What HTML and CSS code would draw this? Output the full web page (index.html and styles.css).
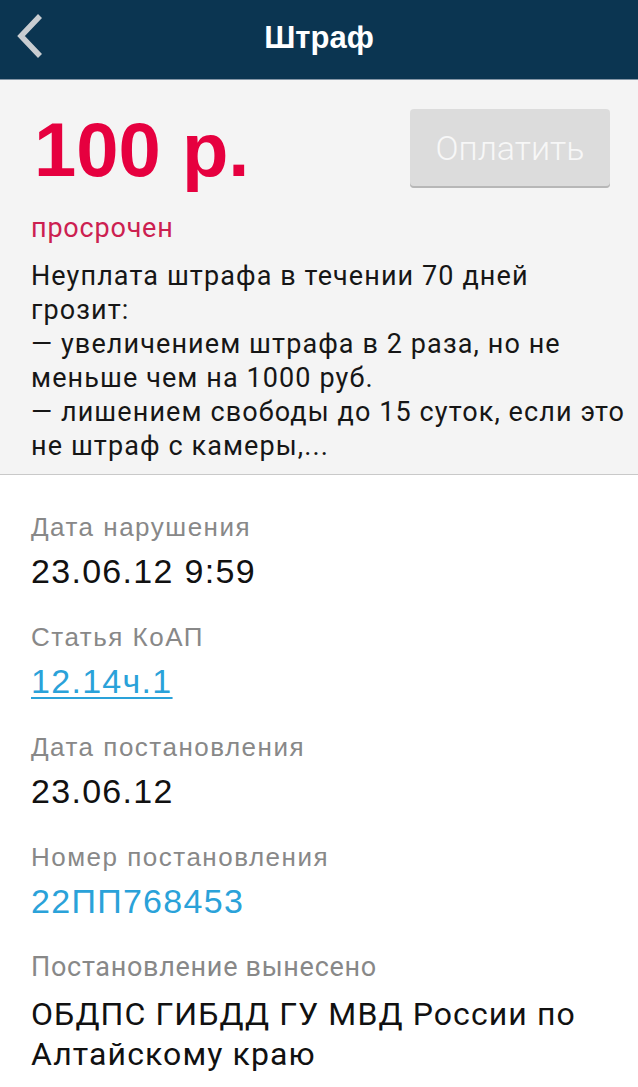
FILE: index.html
```html
<!DOCTYPE html>
<html lang="ru">
<head>
<meta charset="utf-8">
<title>Штраф</title>
<link rel="stylesheet" href="styles.css">
</head>
<body>
<header class="navbar">
  <a class="back" href="#" aria-label="Назад">
    <svg width="30" height="46" viewBox="0 0 30 46"><path d="M25 3 L6 23 L25 43" fill="none" stroke="#c9cdd1" stroke-width="5.5" stroke-linecap="butt" stroke-linejoin="miter"/></svg>
  </a>
  <h1 class="title">Штраф</h1>
</header>
<section class="summary">
  <div class="amount-row">
    <div class="amount">100 р.</div>
    <button class="pay" type="button">Оплатить</button>
  </div>
  <div class="status">просрочен</div>
  <p class="warning">Неуплата штрафа в течении 70 дней грозит:<br>— увеличением штрафа в 2 раза, но не меньше чем на 1000 руб.<br>— лишением свободы до 15 суток, если это не штраф с камеры,...</p>
</section>
<section class="details">
  <div class="field">
    <div class="label">Дата нарушения</div>
    <div class="value">23.06.12 9:59</div>
  </div>
  <div class="field">
    <div class="label">Статья КоАП</div>
    <div class="value"><a class="link underlined" href="#">12.14ч.1</a></div>
  </div>
  <div class="field">
    <div class="label">Дата постановления</div>
    <div class="value">23.06.12</div>
  </div>
  <div class="field">
    <div class="label">Номер постановления</div>
    <div class="value"><span class="link">22ПП768453</span></div>
  </div>
  <div class="field field-narrow">
    <div class="label">Постановление вынесено</div>
    <div class="value">ОБДПС ГИБДД ГУ МВД России по Алтайскому краю</div>
  </div>
</section>
</body>
</html>
```
FILE: styles.css
```css
html, body {
  margin: 0;
  padding: 0;
  background: #ffffff;
}
body {
  width: 638px;
  font-family: "Liberation Sans", Arial, sans-serif;
  color: #111111;
}
.navbar {
  height: 79px;
  background: #0b3551;
  border-bottom: 1px solid #8596a6;
  display: flex;
  align-items: center;
  justify-content: center;
  position: relative;
}
.back {
  position: absolute;
  left: 15px;
  top: 13px;
  display: block;
  width: 30px;
  height: 46px;
}
.back svg { display: block; }
.title {
  margin: 0;
  color: #ffffff;
  font-family: "Liberation Sans", Arial, sans-serif;
  font-weight: bold;
  font-size: 31px;
  line-height: 40px;
  margin-top: -3px;
}
.summary {
  background: #f4f4f4;
  padding: 28px 7px 11px 31px;
  border-bottom: 1px solid #c9c9c9;
}
.amount-row {
  display: flex;
  align-items: center;
  justify-content: space-between;
}
.amount {
  color: #e6003f;
  font-family: "Liberation Sans", Arial, sans-serif;
  font-weight: bold;
  font-size: 76px;
  line-height: 79px;
  margin-left: 3px;
  margin-top: 2px;
}
.pay {
  width: 200px;
  height: 79px;
  border: none;
  border-radius: 4px;
  background: #dcdcdc;
  box-shadow: inset 0 -2px 0 #b7b7b7;
  color: #f7f7f7;
  font-family: Roboto, "Liberation Sans", sans-serif;
  font-weight: 300;
  font-size: 34px;
  padding: 0 0 2px 0;
  margin-right: 21px;
}
.status {
  margin-top: 22px;
  color: #cc2050;
  font-family: Roboto, "Liberation Sans", sans-serif;
  font-size: 27px;
  line-height: 34px;
  letter-spacing: 0.8px;
}
.warning {
  margin: 14px 0 0 0;
  color: #161616;
  font-family: Roboto, "Liberation Sans", sans-serif;
  font-size: 27px;
  line-height: 34px;
  letter-spacing: 1.1px;
}
.details {
  padding: 35px 31px 0 31px;
}
.field {
  margin-bottom: 29px;
}
.label {
  color: #888888;
  font-size: 26px;
  line-height: 34px;
  letter-spacing: 1.5px;
}
.value {
  margin-top: 7px;
  font-size: 34px;
  line-height: 40px;
  letter-spacing: 1.3px;
  color: #111111;
}
.link {
  color: #2aa2d9;
  text-decoration: none;
}
.link.underlined {
  text-decoration: underline;
  text-decoration-thickness: 2px;
  text-underline-offset: 4px;
}
.field-narrow .label {
  font-family: Roboto, "Liberation Sans", sans-serif;
  font-size: 27px;
  letter-spacing: 0.7px;
}
.field-narrow .value {
  margin-top: 10px;
  font-family: Roboto, "Liberation Sans", sans-serif;
  font-size: 32px;
  letter-spacing: 1.1px;
}
```
